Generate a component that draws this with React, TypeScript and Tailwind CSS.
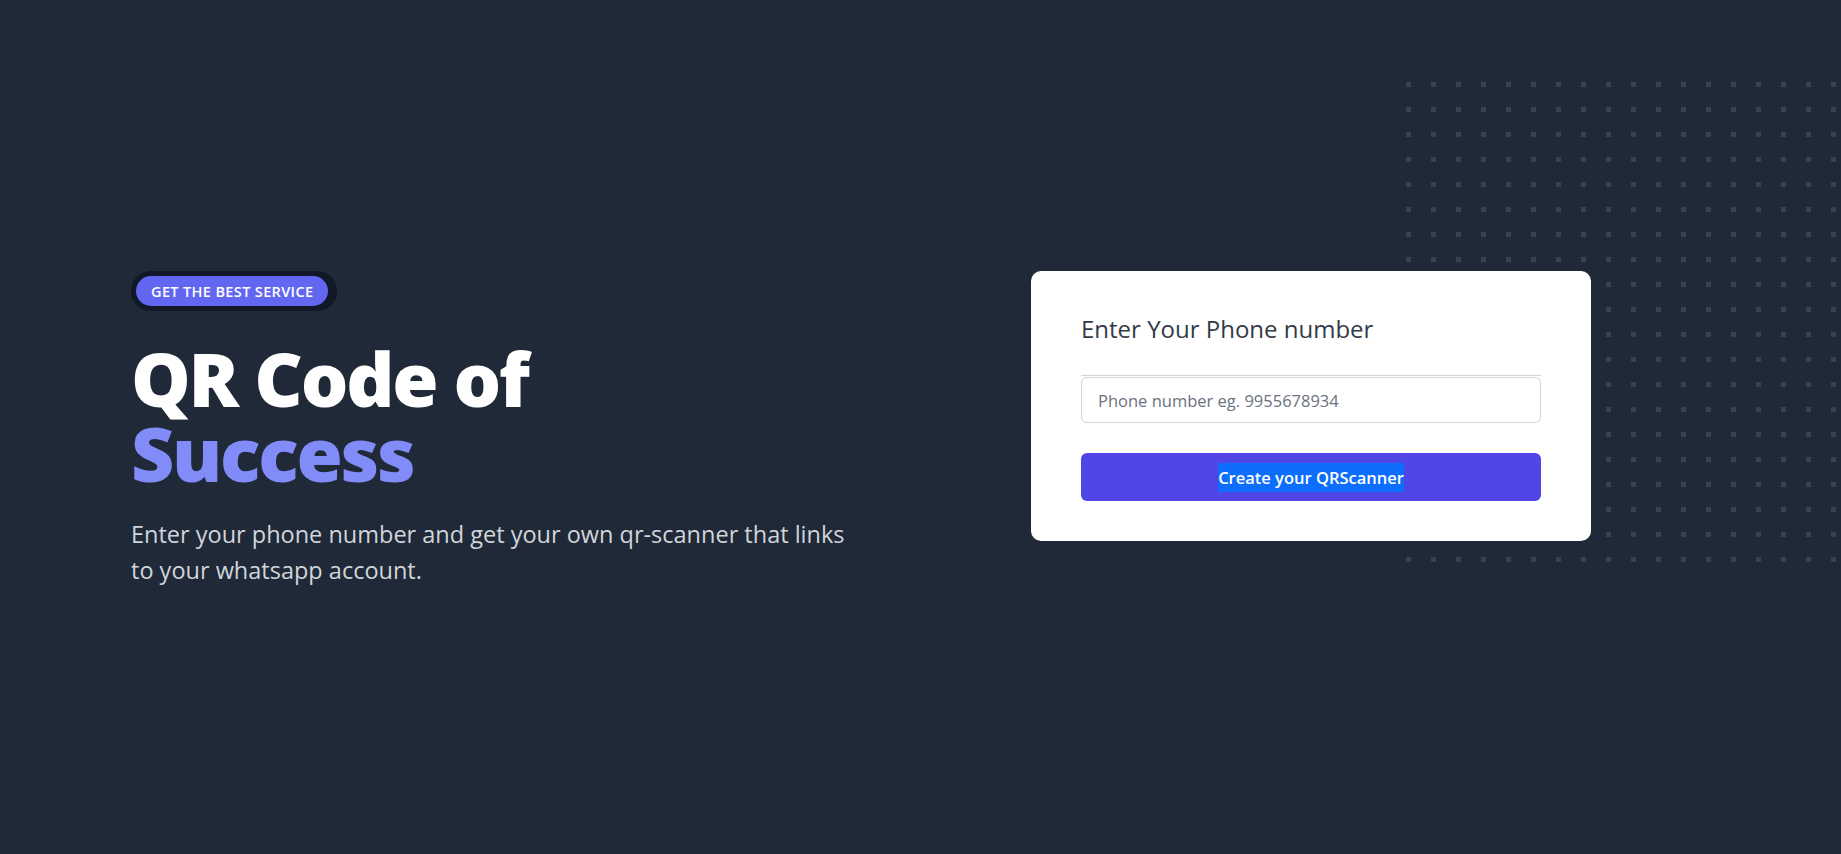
import { useState } from 'react';

function DotPattern() {
  return (
    <svg
      className="pointer-events-none absolute left-[1406px] top-[82px]"
      width={480}
      height={500}
      fill="none"
      aria-hidden="true"
    >
      <defs>
        <pattern id="hero-dots" x="0" y="0" width="25" height="25" patternUnits="userSpaceOnUse">
          <rect x="0" y="0" width="5" height="5" fill="#374151" />
        </pattern>
      </defs>
      <rect width={480} height={500} fill="url(#hero-dots)" />
    </svg>
  );
}

function PhoneCard() {
  const [phone, setPhone] = useState('');

  return (
    <div className="relative w-[560px] rounded-[10px] bg-white px-[50px] py-[40px]">
      <h2 className="text-[24px] font-medium leading-[35px] text-[#333b48]">Enter Your Phone number</h2>

      {/* Input */}
      <div className="mt-[29px] border-t border-[#d1d5db] pt-px">
        <input
          type="tel"
          value={phone}
          onChange={(e) => setPhone(e.target.value)}
          placeholder="Phone number eg. 9955678934"
          className="block h-[46px] w-full rounded-[6px] border border-[#d1d5db] px-[16px] text-[16.5px] text-gray-900 outline-none placeholder:text-[#6b7280]"
        />
      </div>

      {/* Submit */}
      <button
        type="button"
        className="mt-[30px] flex h-[48px] w-full items-center justify-center rounded-[6px] bg-[#4f46e5] text-[16.5px] font-semibold text-white"
      >
        <span className="bg-[#0d6efd] py-[2px] leading-[25px]">Create your QRScanner</span>
      </button>
    </div>
  );
}

export default function App() {
  return (
    <div className="relative min-h-screen overflow-hidden bg-[#1f2937] font-['Open_Sans',sans-serif]">
      <DotPattern />

      <div className="relative flex items-start pl-[131px] pt-[271px]">
        {/* Left copy */}
        <div className="w-[900px] shrink-0">
          <div className="inline-flex items-center rounded-full bg-[#111827] py-[5px] pl-[5px] pr-[9px]">
            <span className="rounded-full bg-[#6366f1] px-[15px] py-[2.5px] text-[14.5px] font-semibold uppercase leading-[25px] tracking-[0.025em] text-white">
              Get the best service
            </span>
          </div>

          <h1 className="mt-[30px] text-[75px] font-extrabold leading-[75px] tracking-[-0.03em]">
            <span className="block text-white">QR Code of</span>
            <span className="block text-[#818cf8]">Success</span>
          </h1>

          <p className="mt-[25px] max-w-[730px] text-[23.5px] leading-[36px] text-[#d1d5db]">
            Enter your phone number and get your own qr-scanner that links to your whatsapp account.
          </p>
        </div>

        {/* Card */}
        <PhoneCard />
      </div>
    </div>
  );
}
